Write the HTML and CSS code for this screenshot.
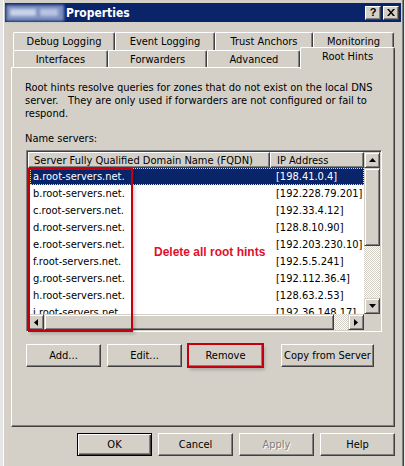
FILE: index.html
```html
<!DOCTYPE html>
<html>
<head>
<meta charset="utf-8">
<title>Properties</title>
<link rel="stylesheet" href="styles.css">
</head>
<body>
<div class="window">
  <div class="titlebar">
    <div class="blur"><span class="blur-a"></span><span class="blur-b"></span></div>
    <span class="title">Properties</span>
    <div class="tbtns">
      <span class="tbtn">?</span>
      <span class="tbtn"><svg width="8" height="7" viewBox="0 0 8 7"><path d="M0 0h2l2 2.4L6 0h2L5 3.5 8 7H6L4 4.6 2 7H0l3-3.5z" fill="#000"/></svg></span>
    </div>
  </div>
  <div class="content">
    <div class="tabs">
      <div class="tabrow">
        <div class="tab w-debug">Debug Logging</div>
        <div class="tab w-event">Event Logging</div>
        <div class="tab w-trust">Trust Anchors</div>
        <div class="tab w-mon">Monitoring</div>
      </div>
      <div class="tabrow front">
        <div class="tab w-int">Interfaces</div>
        <div class="tab w-fwd">Forwarders</div>
        <div class="tab w-adv">Advanced</div>
        <div class="tab w-root active">Root Hints</div>
      </div>
    </div>
    <div class="panel">
      <p class="desc">Root hints resolve queries for zones that do not exist on the local DNS server.&nbsp;&nbsp; They are only used if forwarders are not configured or fail to respond.</p>
      <div class="label">Name servers:</div>
      <div class="listbox">
        <div class="lv-main">
          <div class="lv-head">
            <div class="hcell c1">Server Fully Qualified Domain Name (FQDN)</div>
            <div class="hcell c2">IP Address</div>
          </div>
          <div class="lv-rows">
            <div class="row sel"><span class="c1">a.root-servers.net.</span><span class="c2">[198.41.0.4]</span></div>
            <div class="row"><span class="c1">b.root-servers.net.</span><span class="c2">[192.228.79.201]</span></div>
            <div class="row"><span class="c1">c.root-servers.net.</span><span class="c2">[192.33.4.12]</span></div>
            <div class="row"><span class="c1">d.root-servers.net.</span><span class="c2">[128.8.10.90]</span></div>
            <div class="row"><span class="c1">e.root-servers.net.</span><span class="c2">[192.203.230.10]</span></div>
            <div class="row"><span class="c1">f.root-servers.net.</span><span class="c2">[192.5.5.241]</span></div>
            <div class="row"><span class="c1">g.root-servers.net.</span><span class="c2">[192.112.36.4]</span></div>
            <div class="row"><span class="c1">h.root-servers.net.</span><span class="c2">[128.63.2.53]</span></div>
            <div class="row"><span class="c1">i.root-servers.net.</span><span class="c2">[192.36.148.17]</span></div>
          </div>
        </div>
        <div class="vscroll">
          <div class="sbtn"><svg width="7" height="4" viewBox="0 0 7 4"><path d="M3.5 0L7 4H0z" fill="#000"/></svg></div>
          <div class="thumb vthumb"></div>
          <div class="track"></div>
          <div class="sbtn"><svg width="7" height="4" viewBox="0 0 7 4"><path d="M0 0h7L3.5 4z" fill="#000"/></svg></div>
        </div>
        <div class="hscroll">
          <div class="sbtn"><svg width="4" height="7" viewBox="0 0 4 7"><path d="M4 0v7L0 3.5z" fill="#000"/></svg></div>
          <div class="thumb hthumb"></div>
          <div class="track"></div>
          <div class="sbtn"><svg width="4" height="7" viewBox="0 0 4 7"><path d="M0 0l4 3.5L0 7z" fill="#000"/></svg></div>
        </div>
        <div class="corner"></div>
        <div class="annot-box"></div>
        <div class="annot-text">Delete all root hints</div>
      </div>
      <div class="btnrow">
        <button class="btn">Add...</button>
        <button class="btn">Edit...</button>
        <button class="btn marked">Remove</button>
        <button class="btn wide">Copy from Server</button>
      </div>
    </div>
    <div class="footer">
      <button class="btn default">OK</button>
      <button class="btn">Cancel</button>
      <button class="btn disabled">Apply</button>
      <button class="btn">Help</button>
    </div>
  </div>
</div>
</body>
</html>
```

FILE: styles.css
```css
* { box-sizing: border-box; }
html, body {
  margin: 0;
  padding: 0;
  width: 405px;
  height: 466px;
  overflow: hidden;
  background: #e6e6e6;
}
body {
  font-family: "DejaVu Sans Condensed", "Liberation Sans", sans-serif;
  font-size: 11px;
  color: #000;
}
.window {
  margin-left: 3px;
  width: 401px;
  height: 466px;
  background: #d4d0c8;
  padding: 3px 2px 0 1px;
  border-left: 1px solid #ffffff;
  border-right: 1px solid #404040;
  box-shadow: inset -1px 0 #808080;
  display: flex;
  flex-direction: column;
}
.titlebar {
  height: 19px;
  background: #0a246a;
  display: flex;
  align-items: center;
  padding: 0 2px 0 1px;
}
.blur {
  width: 58px;
  height: 16px;
  background: #7d90bf;
  filter: blur(1.6px);
  display: flex;
  align-items: center;
  gap: 4px;
  padding: 0 4px;
}
.blur-a { width: 26px; height: 7px; background: #c9d3ea; }
.blur-b { width: 18px; height: 7px; background: #b8c4e2; }
.title {
  color: #fff;
  font-weight: bold;
  font-size: 12px;
  margin-left: 2px;
}
.tbtns {
  margin-left: auto;
  display: flex;
  gap: 2px;
}
.tbtn {
  width: 16px;
  height: 14px;
  background: #d4d0c8;
  border: 1px solid;
  border-color: #fff #404040 #404040 #fff;
  box-shadow: inset -1px -1px #808080;
  display: flex;
  align-items: center;
  justify-content: center;
  font-weight: bold;
  font-size: 11px;
  line-height: 1;
  font-family: "Liberation Sans", sans-serif;
}
.content {
  flex: 1;
  display: flex;
  flex-direction: column;
  padding: 10px 6px 0 6px;
}
.tabs {
  padding-left: 2px;
  display: flex;
  flex-direction: column;
}
.tabrow {
  display: flex;
  height: 18px;
}
.tabrow.front {
  margin-bottom: -1px;
}
.tab {
  height: 18px;
  background: #d4d0c8;
  border-top: 1px solid #fff;
  border-left: 1px solid #fff;
  border-right: 1px solid #404040;
  box-shadow: inset -1px 0 #808080;
  border-radius: 2px 2px 0 0;
  display: flex;
  align-items: center;
  justify-content: center;
  white-space: nowrap;
  padding-bottom: 1px;
}
.w-debug { width: 102px; }
.w-event { width: 100px; }
.w-trust { width: 98px; }
.w-mon { width: 81px; }
.w-int { width: 95px; }
.w-fwd { width: 100px; }
.w-adv { width: 93px; }
.w-root { width: 95px; }
.tab.active {
  position: relative;
  z-index: 2;
  height: 22px;
  margin-top: -3px;
  padding-bottom: 4px;
}
.panel {
  height: 360px;
  border-top: 1px solid #fff;
  border-left: 1px solid #fff;
  border-right: 1px solid #404040;
  border-bottom: 1px solid #404040;
  box-shadow: inset -1px -1px #808080;
  padding: 13px 13px 0 13px;
}
.desc {
  margin: 0;
  line-height: 13px;
  width: 350px;
}
.label {
  margin-top: 12px;
  line-height: 13px;
}
.listbox {
  position: relative;
  margin-top: 5px;
  margin-left: 1px;
  width: 356px;
  height: 182px;
  border: 1px solid;
  border-color: #808080 #fff #fff #808080;
  box-shadow: inset 1px 1px #404040, inset -1px -1px #d4d0c8;
  padding: 1px;
  display: grid;
  grid-template-columns: 336px 16px;
  grid-template-rows: 162px 16px;
}
.lv-main {
  background: #fff;
  overflow: hidden;
  display: flex;
  flex-direction: column;
}
.lv-head {
  display: flex;
  height: 16px;
  flex: none;
}
.hcell {
  height: 16px;
  background: #d4d0c8;
  border: 1px solid;
  border-color: #fff #404040 #404040 #fff;
  box-shadow: inset -1px -1px #808080;
  display: flex;
  align-items: center;
  white-space: nowrap;
  overflow: hidden;
}
.hcell.c1 { width: 242px; padding-left: 5px; }
.hcell.c2 { width: 94px; padding-left: 6px; }
.lv-rows {
  display: flex;
  flex-direction: column;
}
.row {
  height: 17px;
  flex: none;
  display: flex;
  align-items: center;
  margin-left: 2px;
  white-space: nowrap;
}
.row .c1 { width: 240px; padding-left: 3px; }
.row .c2 { width: 94px; padding-left: 6px; }
.row.sel {
  background: #0a246a;
  color: #fff;
  outline: 1px dotted #e8d890;
  outline-offset: -1px;
}
.vscroll {
  display: flex;
  flex-direction: column;
}
.hscroll {
  display: flex;
}
.sbtn {
  width: 16px;
  height: 16px;
  flex: none;
  background: #d4d0c8;
  border: 1px solid;
  border-color: #d4d0c8 #404040 #404040 #d4d0c8;
  box-shadow: inset 1px 1px #fff, inset -1px -1px #808080;
  display: flex;
  align-items: center;
  justify-content: center;
}
.thumb {
  flex: none;
  background: #d4d0c8;
  border: 1px solid;
  border-color: #d4d0c8 #404040 #404040 #d4d0c8;
  box-shadow: inset 1px 1px #fff, inset -1px -1px #808080;
}
.vthumb { height: 78px; }
.hthumb { width: 290px; }
.track {
  flex: 1;
  background: repeating-conic-gradient(#ffffff 0 25%, #d4d0c8 0 50%) 0 0 / 2px 2px;
}
.corner { background: #d4d0c8; }
.annot-box {
  position: absolute;
  left: 1px;
  top: 17px;
  width: 105px;
  height: 164px;
  border: 2px solid #c4000e;
  box-shadow: 2px 2px 3px rgba(0,0,0,0.18);
  z-index: 3;
}
.annot-text {
  position: absolute;
  left: 127px;
  top: 94px;
  font-family: "Liberation Sans", sans-serif;
  font-weight: bold;
  font-size: 12px;
  line-height: 14px;
  color: #e0102a;
  white-space: nowrap;
  z-index: 3;
}
.btnrow {
  display: flex;
  margin-top: 12px;
  margin-left: 1px;
  gap: 6px;
}
.btn {
  font-family: inherit;
  font-size: 11px;
  color: #000;
  width: 75px;
  height: 23px;
  padding: 0;
  background: #d4d0c8;
  border: 1px solid;
  border-color: #fff #404040 #404040 #fff;
  box-shadow: inset -1px -1px #808080;
  border-radius: 0;
}
.btn.wide { width: 93px; margin-left: 12px; }
.btn.marked {
  outline: 2px solid #c4000e;
  outline-offset: -1px;
  box-shadow: inset -1px -1px #808080, 2px 3px 3px rgba(0,0,0,0.2);
}
.btn.default {
  border: 1px solid #000;
  box-shadow: inset 1px 1px #fff, inset -1px -1px #404040, inset -2px -2px #808080;
}
.btn.disabled {
  color: #808080;
  text-shadow: 1px 1px #fff;
}
.footer {
  display: flex;
  justify-content: flex-end;
  gap: 6px;
  margin-top: 6px;
  padding-right: 0;
}
```
